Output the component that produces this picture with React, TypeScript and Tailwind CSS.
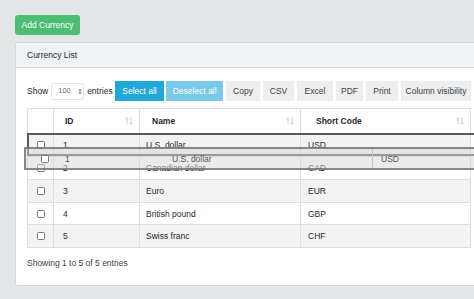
import React from 'react'

const rows = [
  { id: 1, name: 'U.S. dollar', code: 'USD' },
  { id: 2, name: 'Canadian dollar', code: 'CAD' },
  { id: 3, name: 'Euro', code: 'EUR' },
  { id: 4, name: 'British pound', code: 'GBP' },
  { id: 5, name: 'Swiss franc', code: 'CHF' },
]

const rowH = ['h-[23px]', 'h-[23px]', 'h-[23px]', 'h-[22px]', 'h-[23px]']

const tools = [
  { label: 'Copy', w: 'w-[34px]' },
  { label: 'CSV', w: 'w-[31px]' },
  { label: 'Excel', w: 'w-[36px]' },
  { label: 'PDF', w: 'w-[27px]' },
  { label: 'Print', w: 'w-[32px]' },
  { label: 'Column visibility', w: 'w-[70px]' },
]

function SortIcon() {
  return (
    <svg className="absolute right-[6px] top-1/2 -translate-y-1/2" width="8" height="8" viewBox="0 0 8 8" fill="none" stroke="#c4c4c4" strokeWidth="0.9">
      <path d="M2 7.5V0.8M0.6 2.2L2 0.8L3.4 2.2" />
      <path d="M6 0.5V7.2M4.6 5.8L6 7.2L7.4 5.8" />
    </svg>
  )
}

function Box() {
  return <span className="block w-[8px] h-[8px] border border-[#777] rounded-[1.5px] bg-white mx-auto" />
}

export default function App() {
  return (
    <div className="w-[474px] h-[299px] overflow-hidden bg-[#e4e5e6] font-['Liberation_Sans',Arial,sans-serif] text-[#23282c] relative text-[8.5px] leading-[12px]">
      <div className="w-[520px] pl-[15px] pt-[15px]">
        <button className="block h-[20px] w-[65px] rounded-[3px] bg-[#4dbd74] text-white text-[8.5px]">Add Currency</button>

        <div className="mt-[7px] w-[468px] bg-white border border-[#d5dadf] rounded-[2px]">
          <div className="h-[25px] bg-[#f0f3f5] border-b border-[#d5dadf] flex items-center px-[11px]">Currency List</div>

          <div className="px-[11px] pt-[13px] pb-[16px]">
            <div className="flex items-center h-[20px] whitespace-nowrap">
              <span>Show</span>
              <span className="ml-[3px] w-[33px] h-[17px] bg-white border border-[#e4e7ea] rounded-[2px] flex items-center pl-[6px] text-[7.5px] text-[#5c6873]">
                100<span className="ml-[6px] text-[7px] leading-none">⇕</span>
              </span>
              <span className="ml-[3px]">entries</span>
              <button className="ml-[2px] h-[20px] w-[50px] bg-[#20a8d8] text-white">Select all</button>
              <button className="ml-[2px] h-[20px] w-[57px] bg-[#79c9e8] text-white">Deselect all</button>
              <div className="flex gap-[3px] ml-[3px]">
                {tools.map(t => (
                  <button key={t.label} className={`h-[20px] ${t.w} bg-[#eceef0] text-[#3a3f44] whitespace-nowrap`}>{t.label}</button>
                ))}
              </div>
            </div>

            <table className="mt-[7px] w-[444px] border-collapse table-fixed">
              <colgroup>
                <col className="w-[26px]" /><col className="w-[86px]" /><col className="w-[161px]" /><col />
              </colgroup>
              <thead>
                <tr className="h-[25px] bg-white">
                  <th className="border border-[#dcdfe2]" />
                  <th className="border border-[#dcdfe2] relative text-left pl-[11px] font-bold">ID<SortIcon /></th>
                  <th className="border border-[#dcdfe2] relative text-left pl-[12px] font-bold">Name<SortIcon /></th>
                  <th className="border border-[#dcdfe2] relative text-left pl-[15px] font-bold">Short Code<SortIcon /></th>
                </tr>
              </thead>
              <tbody>
                {rows.map((r, i) => (
                  <tr key={r.id} className={`${rowH[i]} ${i % 2 === 0 ? 'bg-[#f2f2f2]' : 'bg-white'}`}>
                    <td className="border border-[#dcdfe2]"><Box /></td>
                    <td className="border border-[#dcdfe2] pl-[9px]">{r.id}</td>
                    <td className="border border-[#dcdfe2] pl-[6px]">{r.name}</td>
                    <td className="border border-[#dcdfe2] pl-[7px]">{r.code}</td>
                  </tr>
                ))}
              </tbody>
            </table>

            <div className="mt-[9px] text-[#3a3f44]">Showing 1 to 5 of 5 entries</div>
          </div>
        </div>
      </div>

      {/* outline on the row being moved */}
      <div className="absolute left-[27px] top-[133px] w-[460px] h-[23px] border-2 border-[#5a5a5a] pointer-events-none" />

      {/* floating clone of the row being dragged */}
      <div className="absolute left-[24px] top-[147px] w-[470px] h-[23px] flex items-center bg-[#d6d6d6]/50 border-2 border-[#6e6e6e]/80 text-[#23282c]/80">
        <div className="w-[36px] flex justify-center pl-[2px]"><Box /></div>
        <div className="w-[110px] pl-[3px]">1</div>
        <div className="w-[200px]">U.S. dollar</div>
        <div className="h-full border-l border-[#c4c4c4] pl-[8px] flex items-center">USD</div>
      </div>
    </div>
  )
}
